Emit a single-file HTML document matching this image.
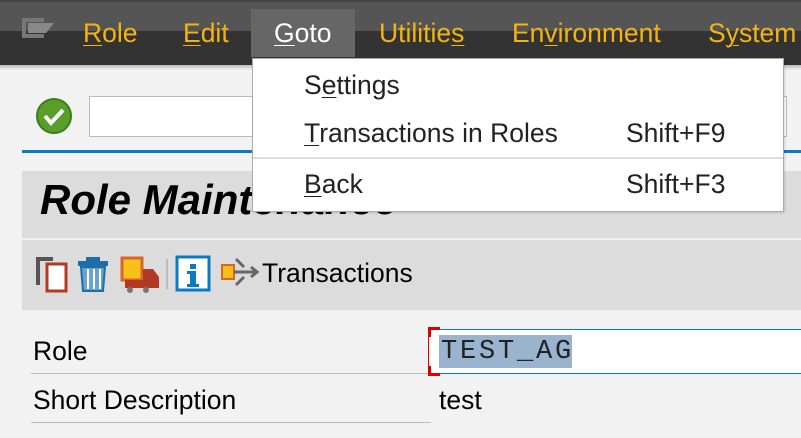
<!DOCTYPE html>
<html><head><style>
*{margin:0;padding:0;box-sizing:border-box}
body{width:801px;height:438px;overflow:hidden;background:#f2f2f2;font-family:"Liberation Sans",sans-serif;position:relative}
.a{position:absolute}
.m{position:absolute;top:18px;font-size:26.5px;color:#f5b312;white-space:nowrap}
.u{text-decoration:underline;text-underline-offset:3px;text-decoration-thickness:1px}
.d{position:absolute;font-size:26.5px;color:#222;white-space:nowrap}
.t{position:absolute;font-size:26.5px;color:#000;white-space:nowrap}
</style></head><body>
<div class="a" style="left:0;top:0;width:801px;height:31px;background:#555"></div>
<div class="a" style="left:0;top:0;width:801px;height:2px;background:#444"></div>
<div class="a" style="left:0;top:31px;width:801px;height:34px;background:#333"></div>
<div class="a" style="left:0;top:65px;width:801px;height:5px;background:linear-gradient(#bbb,#f2f2f2)"></div>
<svg class="a" style="left:22px;top:17px" width="34" height="26"><path d="M0 1h22v4H4v12h18v4H0z" fill="#777"/><path d="M6 6h26l-8 10H6z" fill="#888"/></svg>
<div class="a" style="left:251px;top:9px;width:104px;height:48px;background:#666"></div>
<div class="m" style="left:83px"><span class="u">R</span>ole</div>
<div class="m" style="left:183px"><span class="u">E</span>dit</div>
<div class="m" style="left:274px;color:#fff"><span class="u">G</span>oto</div>
<div class="m" style="left:379px">Utilitie<span class="u">s</span></div>
<div class="m" style="left:512px">En<span class="u">v</span>ironment</div>
<div class="m" style="left:708px">S<span class="u">y</span>stem</div>

<svg class="a" style="left:36px;top:98px" width="36" height="36"><circle cx="18" cy="18" r="17" fill="#5a9e2a" stroke="#3f7d1c" stroke-width="2"/><path d="M9 18l6 7 12-13" fill="none" stroke="#fff" stroke-width="4"/></svg>
<div class="a" style="left:89px;top:96px;width:698px;height:41px;background:#fff;border:1px solid #bbb"></div>
<div class="a" style="left:22px;top:150px;width:779px;height:3px;background:#0a7bc2"></div>

<div class="a" style="left:22px;top:171px;width:779px;height:67px;background:#dcdcdc"></div>
<div class="a" style="left:40px;top:176px;font-size:42px;font-weight:bold;font-style:italic;color:#000;white-space:nowrap">Role Maintenance</div>
<div class="a" style="left:22px;top:240px;width:779px;height:70px;background:#dcdcdc"></div>
<svg class="a" style="left:35px;top:255px" width="230" height="40">
<path d="M1 2h17v4H5v24H1z" fill="#555"/><rect x="12" y="9" width="19" height="27" fill="#fff" stroke="#b33a22" stroke-width="3"/>
<path d="M43 6h30v5H43z" fill="#1f6ea8"/><rect x="51" y="2" width="14" height="5" fill="#1f6ea8"/><path d="M46 12h24l-2 24H48z" fill="#6aa3cf" stroke="#1f6ea8" stroke-width="2"/><path d="M53 14v20M59 14v20M65 14v20" stroke="#fff" stroke-width="2"/>
<rect x="87" y="3" width="20" height="22" fill="#f7c01a" stroke="#d9652a" stroke-width="3"/><path d="M90 25h34v8H90z" fill="#b33a22"/><path d="M108 14h10l6 8v4h-16z" fill="#b33a22"/><circle cx="95" cy="35" r="3" fill="#777"/><circle cx="111" cy="35" r="3" fill="#777"/>
<rect x="131" y="4" width="2" height="30" fill="#bbb"/>
<rect x="142" y="2" width="32" height="33" fill="#fff" stroke="#0a7bc2" stroke-width="3"/><rect x="155" y="9" width="6" height="5" fill="#0a7bc2"/><path d="M152 16h9v13h3v3h-12v-3h3v-10h-3z" fill="#0a7bc2"/>
<rect x="187" y="10" width="12" height="14" fill="#f7c01a" stroke="#d9652a" stroke-width="2"/><path d="M199 17h24M216 12l6 5-6 5M201 4l8 8M201 30l8-8" stroke="#666" stroke-width="3" fill="none"/>
</svg>
<div class="t" style="left:262px;top:258px">Transactions</div>

<div class="t" style="left:33px;top:336px">Role</div>
<div class="a" style="left:31px;top:373px;width:400px;height:1px;background:#bbb"></div>
<div class="t" style="left:33px;top:385px">Short Description</div>
<div class="a" style="left:31px;top:422px;width:400px;height:1px;background:#bbb"></div>
<div class="a" style="left:430px;top:329px;width:380px;height:45px;background:#fff;border:1px solid #0a7bc2"></div>
<div class="a" style="left:428px;top:327px;width:12px;height:49px;border:3px solid #d00;border-right:none"></div>
<div class="a" style="left:429px;top:337px;width:8px;height:29px;background:#f2f2f2"></div>
<div class="a" style="left:431px;top:337px;width:6px;height:29px;background:#fff"></div>
<div class="a" style="left:439px;top:335px;width:133px;height:33px;background:#9ab4cf"></div>
<div class="a" style="left:441px;top:337px;font-family:'Liberation Mono',monospace;font-size:27px;letter-spacing:2.8px;color:#222">TEST_AG</div>
<div class="t" style="left:439px;top:385px">test</div>

<div class="a" style="left:252px;top:58px;width:532px;height:154px;background:#fff;border:1px solid #aaa;box-shadow:1px 1px 2px rgba(0,0,0,.15)"></div>
<div class="a" style="left:253px;top:157px;width:530px;height:2px;background:#ddd"></div>
<div class="d" style="left:304px;top:70px">S<span class="u">e</span>ttings</div>
<div class="d" style="left:304px;top:118px"><span class="u">T</span>ransactions in Roles</div>
<div class="d" style="left:626px;top:118px">Shift+F9</div>
<div class="d" style="left:304px;top:169px"><span class="u">B</span>ack</div>
<div class="d" style="left:626px;top:169px">Shift+F3</div>
</body></html>
